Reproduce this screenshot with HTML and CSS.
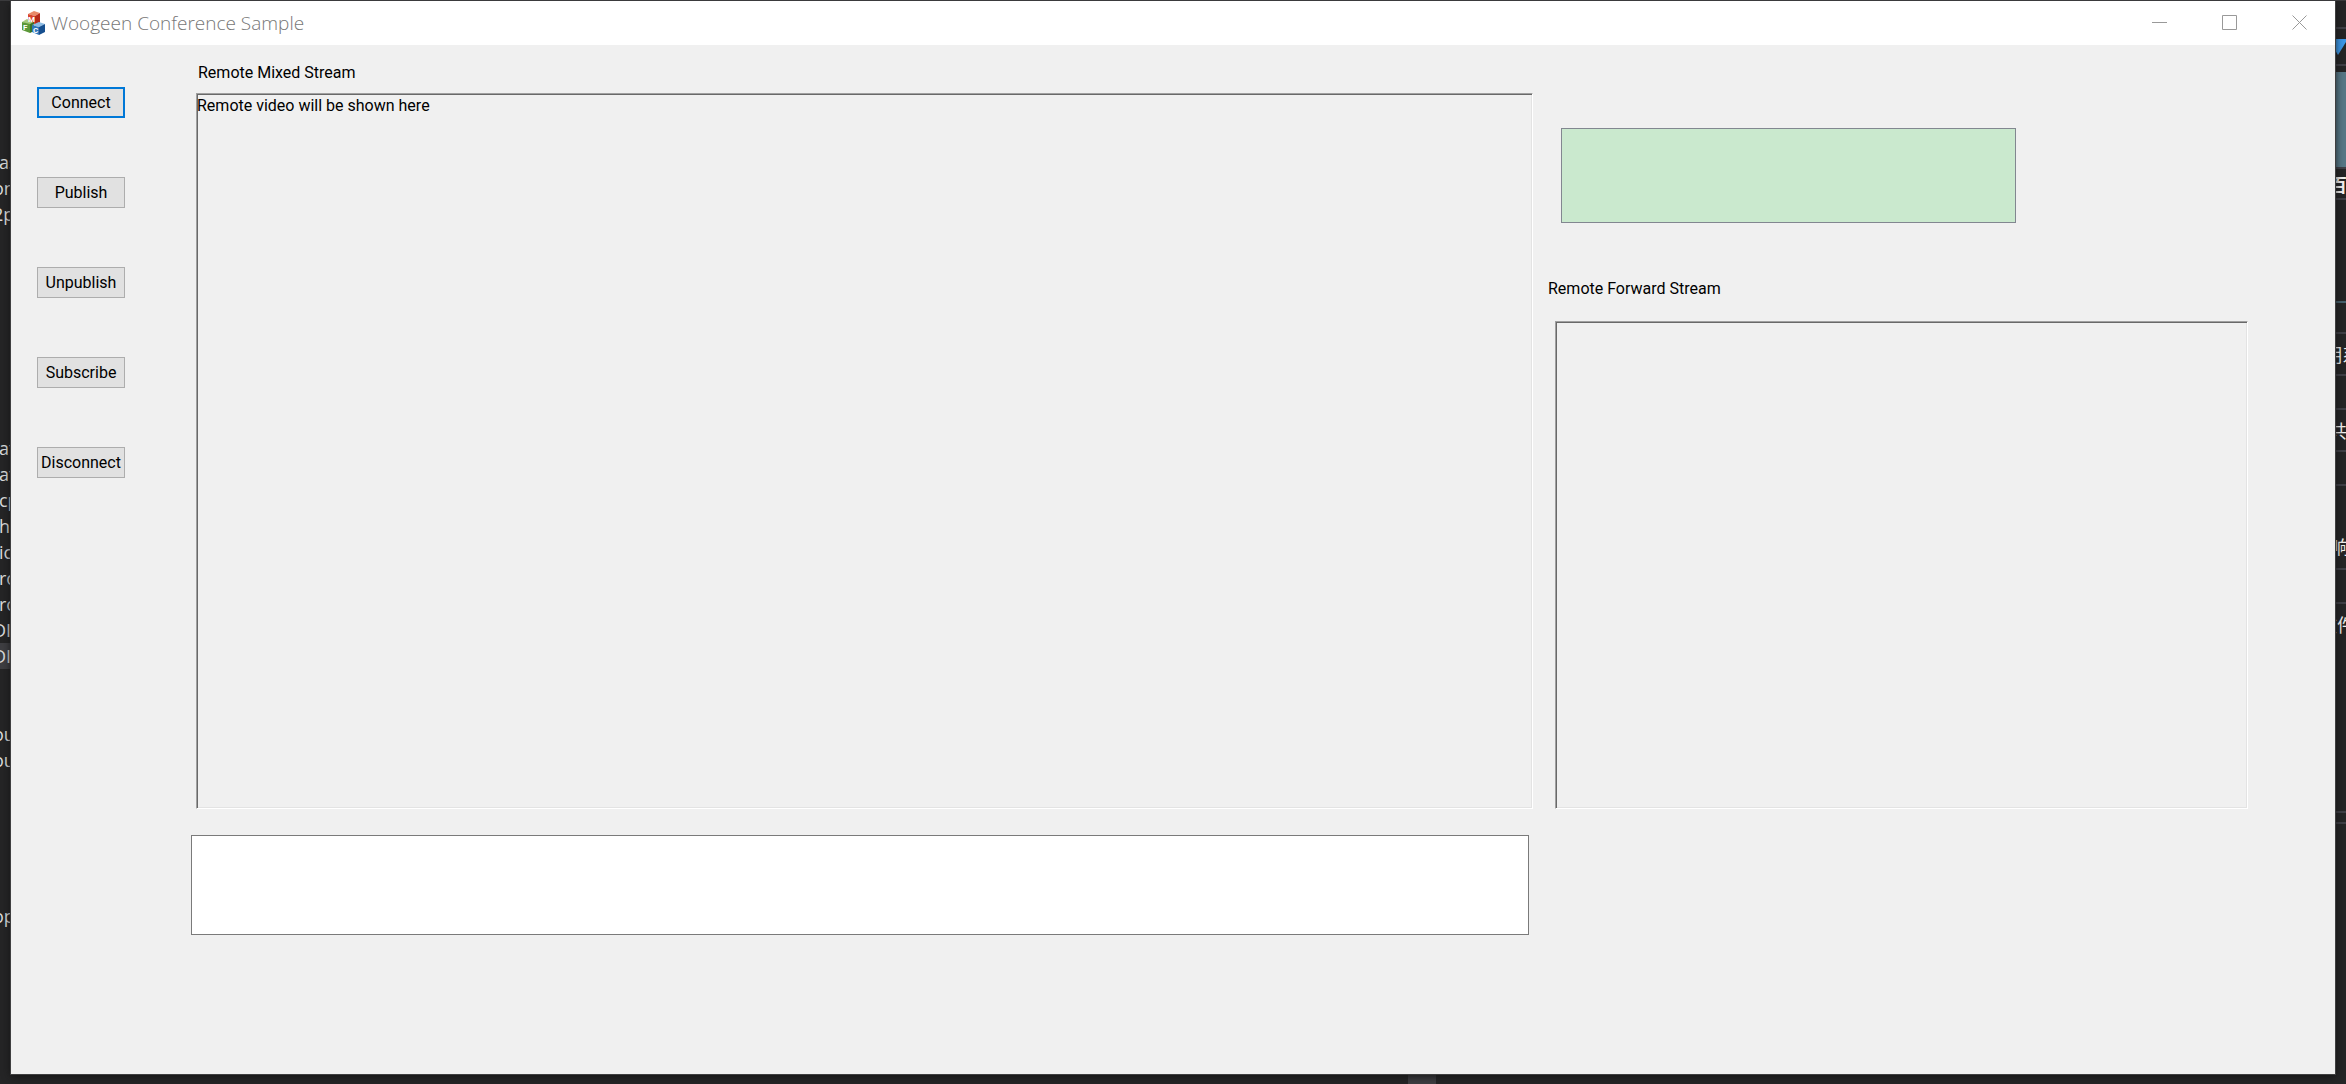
FILE: index.html
```
<!DOCTYPE html>
<html lang="en">
<head>
    <meta charset="UTF-8">
    <meta name="viewport" content="width=device-width, initial-scale=1.0">
    <title>Woogeen Conference Sample</title>
    <link rel="stylesheet" href="styles.css">
</head>
<body>

<div class="desktop">
    <!-- Editor behind the window, left edge -->
    <ul class="code-edge">
        <li class="whole">as</li><li>on</li><li>2p</li>
        <li></li><li></li><li></li><li></li><li></li><li></li><li></li><li></li>
        <li class="whole">at</li><li class="whole">at</li><li class="whole">cp</li><li class="whole">h</li>
        <li class="whole">ic</li><li class="whole">ro</li><li class="whole">ro</li><li>DI</li><li class="current">DI</li>
        <li></li><li></li>
        <li>ou</li><li>ou</li>
        <li></li><li></li><li></li><li></li><li></li>
        <li>op</li>
    </ul>

    <div class="window">
        <header class="title-bar">
            <svg class="app-icon" viewBox="0 0 24 24" width="24" height="24">
                <path fill="#e88a68" d="M6 3l6-3 6 2-5 3z"/>
                <path fill="#d9452c" d="M6 3l7 2v9l-7-2z"/>
                <path fill="#b52a1a" d="M13 5l5-3v10l-5 2z"/>
                <path fill="#a5c97c" d="M0 11l5-3 6 3-3 3z"/>
                <path fill="#5b9838" d="M0 11l8 2v9l-8-3z"/>
                <path fill="#3a7426" d="M8 13l4-2v9l-4 2z"/>
                <path fill="#8dbce4" d="M10 14l7-3 6 2-6 3z"/>
                <path fill="#2f76b9" d="M10 14l7 2v8l-7-3z"/>
                <path fill="#164f8f" d="M17 16l6-3v8l-6 3z"/>
                <text x="6" y="11">M</text>
                <text x="1" y="19">F</text>
                <text x="11" y="22">C</text>
            </svg>
            <h1>Woogeen Conference Sample</h1>
            <div class="window-controls">
                <button aria-label="Minimize"><svg viewBox="0 0 16 16" width="16" height="16"><path d="M0 7.5h15"/></svg></button>
                <button aria-label="Maximize"><svg viewBox="0 0 16 16" width="16" height="16"><path d="M.5.5h14v14H.5z"/></svg></button>
                <button aria-label="Close"><svg viewBox="0 0 16 16" width="16" height="16"><path d="M.5.5l14 14M14.5.5l-14 14"/></svg></button>
            </div>
        </header>

        <main class="dialog">
            <div class="actions">
                <button class="default">Connect</button>
                <button>Publish</button>
                <button>Unpublish</button>
                <button>Subscribe</button>
                <button>Disconnect</button>
            </div>

            <section class="mixed">
                <h2>Remote Mixed Stream</h2>
                <div class="video">Remote video will be shown here</div>
                <textarea class="message" aria-label="Message"></textarea>
            </section>

            <section class="forward">
                <select class="streams" size="4" aria-label="Streams"></select>
                <h2>Remote Forward Stream</h2>
                <div class="video"></div>
            </section>
        </main>
    </div>

    <!-- Tool panel behind the window, right edge -->
    <div class="panel-edge">
        <div class="row toolbar"></div>
        <div class="row search"><svg viewBox="0 0 11 16" width="11" height="16"><path fill="#3b97e8" d="M0 0h11v3L3 16 0 11z"/></svg></div>
        <div class="row spacer"></div>
        <div class="row tab"></div>
        <div class="row heading">百</div>
        <div class="row tree"></div>
        <div class="row thin"></div>
        <div class="row item">明系</div>
        <div class="row short"></div>
        <div class="row item shared">共</div>
        <div class="row short"></div>
        <div class="row note">响</div>
        <div class="row short"></div>
        <div class="row file">文件</div>
        <div class="row rest"></div>
        <div class="row footer"></div>
    </div>

    <div class="status-edge"><span></span></div>
</div>

</body>
</html>
```

FILE: styles.css
```
* {
    margin: 0;
    padding: 0;
    box-sizing: border-box;
}

body {
    font-family: Roboto, "Noto Sans", "Noto Sans CJK SC", sans-serif;
    font-size: 16px;
    color: #000;
    background-color: #252526;
}

h1, h2 {
    font-weight: normal;
}

.desktop {
    display: grid;
    grid-template-columns: 11px minmax(0, 1fr) 11px;
    grid-template-rows: minmax(0, 1fr) 10px;
    height: 100vh;
    min-height: 700px;
    overflow: hidden;
    border-top: 1px solid #3a3a3c;
}

/* Window */
.window {
    display: flex;
    flex-direction: column;
    background-color: #f0f0f0;
    box-shadow: 0 0 0 1px #3f3f40, 0 2px 8px #111;
    z-index: 1;
}

.title-bar {
    display: flex;
    align-items: center;
    height: 44px;
    padding-left: 11px;
    background-color: #fff;
}

.app-icon {
    margin-right: 5px;
}

.app-icon text {
    font-size: 8px;
    font-weight: bold;
    fill: #fff;
}

.title-bar h1 {
    flex: 1;
    font-family: "Open Sans", "Noto Sans", sans-serif;
    font-size: 19px;
    font-weight: 300;
    line-height: 24px;
    color: #777;
}

.window-controls {
    display: flex;
}

.window-controls button {
    width: 70px;
    height: 44px;
    border: none;
    background: none;
}

.window-controls svg {
    display: block;
    margin: 0 auto;
    fill: none;
    stroke: #999;
}

/* Dialog */
.dialog {
    flex: 1;
    display: grid;
    grid-template-columns: 88px minmax(0, 1408fr) minmax(0, 715fr);
    padding: 15px 87px 0 26px;
}

.actions {
    display: flex;
    flex-direction: column;
    gap: 59px;
    padding-top: 27px;
}

.actions button {
    height: 31px;
    font: inherit;
    white-space: nowrap;
    border: 1px solid #adadad;
    background-color: #e1e1e1;
}

.actions .default {
    border: 2px solid #0078d7;
}

.mixed, .forward {
    display: flex;
    flex-direction: column;
}

.mixed {
    margin-left: 66px;
    padding-bottom: 139px;
}

.forward {
    margin-left: 15px;
    padding: 68px 0 265px;
}

.dialog h2 {
    font-size: 16px;
    line-height: 24px;
}

.mixed h2 {
    margin: 1px 0 8px 7px;
}

.forward h2 {
    margin: 54px 0 20px;
}

.video {
    flex: 1;
    line-height: 24px;
    border: 1px solid #fff;
    border-top-color: #a0a0a0;
    border-left-color: #a0a0a0;
    box-shadow: inset 1px 1px #696969, inset -1px -1px #e3e3e3;
}

.mixed .video {
    margin-left: 5px;
}

.forward .video {
    margin-left: 7px;
}

.message {
    height: 100px;
    margin: 26px 4px 0 0;
    padding: 4px;
    font: inherit;
    resize: none;
    border: 1px solid #7a7a7a;
    border-radius: 0;
    background-color: #fff;
}

.streams {
    width: 65%;
    height: 95px;
    margin-left: 13px;
    border: 1px solid #828790;
    border-radius: 0;
    background-color: #cae9ce;
}

/* Edges of the programs behind the window */
.code-edge {
    padding-top: 148px;
    overflow: hidden;
    list-style: none;
    font-family: "Open Sans", "Noto Sans", sans-serif;
    font-size: 18px;
    line-height: 26px;
    color: #dcdcdc;
}

.code-edge li {
    height: 26px;
    text-indent: -7px;
}

.code-edge .whole {
    text-indent: -1px;
}

.code-edge .current {
    background-color: #3e3e42;
}

.panel-edge {
    display: flex;
    flex-direction: column;
    overflow: hidden;
    font-size: 18px;
    color: #f1f1f1;
}

.row {
    display: flex;
    align-items: center;
    flex-shrink: 0;
    border-bottom: 2px solid #3f3f46;
    white-space: nowrap;
}

.toolbar { height: 28px; }
.search { height: 37px; }
.spacer { height: 6px; border: none; }
.tab { height: 97px; background-color: #567786; }
.heading { height: 31px; font-weight: bold; text-indent: -6px; }
.tree { height: 103px; border-color: #46606c; }
.thin { height: 31px; }
.item { height: 42px; text-indent: -11px; }
.shared { text-indent: -6px; }
.short { height: 34px; }
.note { height: 84px; align-items: flex-end; padding-bottom: 9px; text-indent: -4px; }
.file { height: 40px; border: none; text-indent: -16px; }
.rest { height: 169px; }
.footer { height: 11px; }

.status-edge {
    grid-column: 1 / -1;
    padding-left: 60%;
}

.status-edge span {
    display: block;
    width: 28px;
    height: 10px;
    background-color: #3e3e42;
}
```
